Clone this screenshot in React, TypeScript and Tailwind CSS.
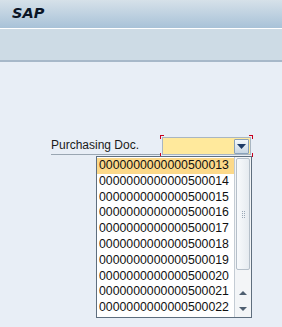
import React from 'react';

const font = { fontFamily: '"Liberation Sans", Arial, sans-serif' };

const items = Array.from({ length: 10 }, (_, i) => `0000000000000${500013 + i}`);

// red corner marks around the required field
function Corner({ pos }: { pos: string }) {
  return <span className={`absolute w-[4px] h-[4px] border-[#c8001e] ${pos}`} />;
}

export default function App() {
  return (
    <div className="w-[282px] h-[327px] bg-[#e8eef6] overflow-hidden" style={font}>
      {/* title bar */}
      <div className="h-[28px] bg-gradient-to-b from-[#d6e1e9] to-[#a8c2d8] pl-[12px] pt-[1px]">
        <span
          className="text-[14.5px] font-bold italic text-[#0a1526]"
          style={{ fontFamily: '"DejaVu Sans", Verdana, sans-serif' }}
        >
          SAP
        </span>
      </div>
      {/* toolbar band */}
      <div className="h-[34px] border-t border-white bg-[#cddbe5] border-b-2 border-b-[#a7b8c9]" />

      {/* field row */}
      <div className="mt-[74px] flex items-start">
        <div className="ml-[51px] w-[109px] h-[19px] border-b border-[#9aa6b2] text-[12px] leading-[19px] text-[#1a1a1a]">
          Purchasing Doc.
        </div>
        <div className="relative w-[93px] h-[22px] -mt-[1px]">
          <Corner pos="left-0 top-0 border-l border-t" />
          <Corner pos="right-0 top-0 border-r border-t" />
          <Corner pos="left-0 bottom-0 border-l border-b" />
          <Corner pos="right-0 bottom-0 border-r border-b" />
          <div className="absolute left-[2px] top-[2px] right-[2px] bottom-[2px] bg-[#ffe99c] border border-[#a9b6c2] flex justify-end items-center pr-[1px]">
            <div className="w-[15px] h-[15px] bg-gradient-to-b from-[#f4f8fb] to-[#c8d6e3] border border-[#8aa2ba] rounded-[1px] flex items-center justify-center">
              <svg width="9" height="5" viewBox="0 0 9 5">
                <path d="M0 0 H9 L4.5 5 Z" fill="#1d3a66" />
              </svg>
            </div>
          </div>

          {/* dropdown list */}
          <div className="absolute left-[-64px] top-[21px] w-[156px] h-[162px] bg-white border border-[#5e6e7e] flex z-10">
            <div className="flex-1 pt-[1px]">
              {items.map((v, i) => (
                <div
                  key={v}
                  className={`h-[15.8px] leading-[15.8px] pl-[2px] text-[12.3px] text-[#111] ${i === 0 ? 'bg-[#fcd98a]' : ''}`}
                >
                  {v}
                </div>
              ))}
            </div>
            <div className="w-[17px] border-l border-[#c4ccd4] bg-[#f3f5f7] flex flex-col p-[1px]">
              <div className="h-[112px] bg-gradient-to-r from-[#f8fafc] to-[#e6ebf0] border border-[#b5bfc9] rounded-[2px] flex items-center justify-center">
                <div className="grid grid-cols-2 gap-[1px]">
                  {Array.from({ length: 8 }, (_, i) => (
                    <span key={i} className="w-[1px] h-[1px] bg-[#9aa8b6]" />
                  ))}
                </div>
              </div>
              <div className="flex-1" />
              <div className="h-[16px] flex items-center justify-center">
                <svg width="8" height="4" viewBox="0 0 8 4">
                  <path d="M0 4 H8 L4 0 Z" fill="#4f5f70" />
                </svg>
              </div>
              <div className="h-[15px] flex items-center justify-center">
                <svg width="8" height="4" viewBox="0 0 8 4">
                  <path d="M0 0 H8 L4 4 Z" fill="#4f5f70" />
                </svg>
              </div>
            </div>
          </div>
        </div>
      </div>
    </div>
  );
}
